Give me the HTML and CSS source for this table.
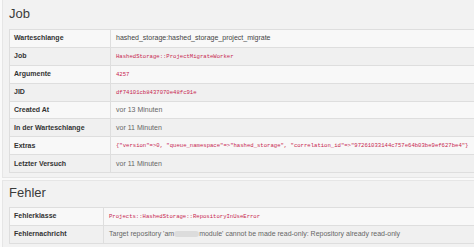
FILE: index.html
```html
<!DOCTYPE html>
<html lang="de">
<head>
    <meta charset="UTF-8">
    <title>Job</title>
    <link rel="stylesheet" href="styles.css">
</head>
<body>
    <div class="page">
        <div class="panel panel-job">
            <h3>Job</h3>
            <table class="info job-info">
                <tr><th>Warteschlange</th><td class="queue">hashed_storage:hashed_storage_project_migrate</td></tr>
                <tr><th>Job</th><td><code>HashedStorage::ProjectMigrateWorker</code></td></tr>
                <tr><th>Argumente</th><td><code>4257</code></td></tr>
                <tr><th>JID</th><td><code>df74101cb8437070e48fc91e</code></td></tr>
                <tr><th>Created At</th><td>vor 13 Minuten</td></tr>
                <tr><th>In der Warteschlange</th><td>vor 11 Minuten</td></tr>
                <tr><th>Extras</th><td><code>{"version"=&gt;0, "queue_namespace"=&gt;"hashed_storage", "correlation_id"=&gt;"97261033144c757e64b03be9ef627be4"}</code></td></tr>
                <tr><th>Letzter Versuch</th><td>vor 11 Minuten</td></tr>
            </table>
        </div>
        <div class="panel panel-error">
            <h3>Fehler</h3>
            <table class="info error-info">
                <tr><th>Fehlerklasse</th><td><code>Projects::HashedStorage::RepositoryInUseError</code></td></tr>
                <tr><th>Fehlernachricht</th><td>Target repository 'am<span class="redacted"></span>module' cannot be made read-only: Repository already read-only</td></tr>
            </table>
        </div>
    </div>
</body>
</html>
```

FILE: styles.css
```css
body {
    margin: 0;
    background: #fafafa;
    font-family: 'Liberation Sans', Arial, sans-serif;
    color: #333;
}
.page {
    width: 474px;
    height: 247px;
    overflow: hidden;
}
.panel {
    width: 560px;
    margin-left: 2px;
    background: #f2f2f2;
    border: 1px solid #e6e6e6;
    border-right: none;
    padding: 0 0 0 6px;
}
.panel-job {
    padding-top: 6px;
    padding-bottom: 4px;
    border-top: none;
}
.panel-error {
    margin-top: 2px;
    padding-top: 4px;
    padding-bottom: 4px;
}
h3 {
    margin: 0 0 7px 0;
    font-size: 13px;
    line-height: 16px;
    font-weight: 400;
    color: #3a3a3a;
}
.panel-error h3 {
    margin-bottom: 6px;
}
.info {
    width: 100%;
    border-collapse: collapse;
    border: 1px solid #dedede;
}
.info tr {
    height: 17.875px;
}
.info th,
.info td {
    border-top: 1px solid #dedede;
    padding: 0 4px;
    line-height: 8px;
    font-size: 7px;
    text-align: left;
    vertical-align: middle;
    white-space: nowrap;
}
.info th {
    font-weight: 700;
    color: #333;
    border-right: 1px solid #dedede;
}
.info td {
    color: #666;
    padding-left: 5px;
}
.job-info th {
    width: 92px;
}
.error-info th {
    width: 85px;
}
.info tr:nth-child(odd) {
    background: #f8f8f8;
}
.info tr:nth-child(even) {
    background: #f0f0f0;
}
.info td.queue {
    color: #444;
}
code {
    font-family: 'Liberation Mono', 'DejaVu Sans Mono', monospace;
    font-size: 5.6px;
    color: #c7254e;
}
.redacted {
    display: inline-block;
    width: 25px;
    height: 6px;
    vertical-align: -1px;
    background: #dcdcdc;
    border-radius: 3px;
}
```
